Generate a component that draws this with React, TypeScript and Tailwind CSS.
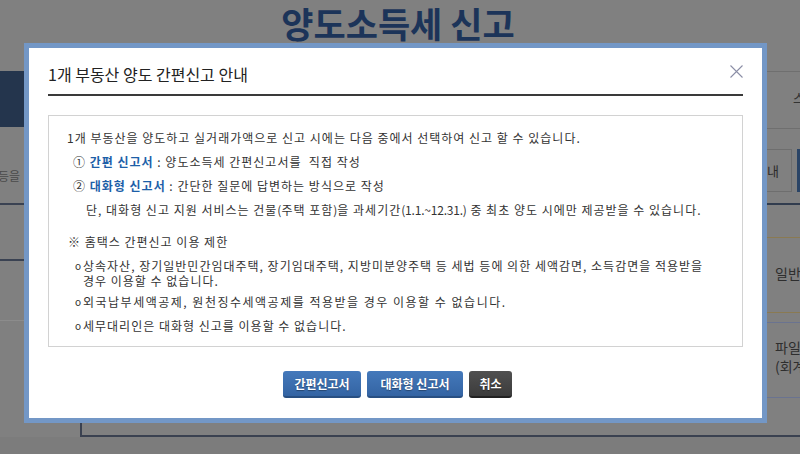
import React from "react";

const Blue = ({ children }: { children: React.ReactNode }) => (
  <b className="font-bold text-[#1d5fa8]">{children}</b>
);

const Mark = () => (
  <span className="w-[8px] shrink-0 text-[10px] tracking-normal">o</span>
);

function Modal() {
  return (
    <div className="absolute left-[24px] top-[43px] w-[743px] h-[380px] border-[5px] border-[#7397c6] bg-white px-[19px] flex flex-col">
      <div className="flex items-center justify-between pt-[15px] pb-[9px] border-b-2 border-[#3a3a3a]">
        <h2 className="text-[16px] leading-[22px] text-[#222] font-normal">1개 부동산 양도 간편신고 안내</h2>
        <svg width="13" height="13" viewBox="0 0 13 13" className="mb-[5px]">
          <path d="M0.5 0.5 L12.5 12.5 M12.5 0.5 L0.5 12.5" stroke="#8b8ea6" strokeWidth="1.1" fill="none" />
        </svg>
      </div>
      <div className="mt-[19px] h-[232px] border border-[#d2d2d2] pl-[18px] pt-[15px] text-[12px] leading-[14px] tracking-[1px] text-[#333] whitespace-pre">
        <p>1개 부동산을 양도하고 실거래가액으로 신고 시에는 다음 중에서 선택하여 신고 할 수 있습니다.</p>
        <p className="mt-[10px] pl-[6px]">
          ① <Blue>간편 신고서</Blue> : 양도소득세 간편신고서를  직접 작성
        </p>
        <p className="mt-[10px] pl-[6px]">
          ② <Blue>대화형 신고서</Blue> : 간단한 질문에 답변하는 방식으로 작성
        </p>
        <p className="mt-[10px] pl-[19px]">
          단, 대화형 신고 지원 서비스는 건물<span className="tracking-normal">(</span>주택 포함<span className="tracking-normal">)</span>을 과세기간<span className="tracking-[-0.2px]">(1.1.~12.31.)</span> 중 최초 양도 시에만 제공받을 수 있습니다.
        </p>
        <p className="mt-[18px] pl-[1px]">※ 홈택스 간편신고 이용 제한</p>
        <div className="mt-[9px] pl-[8px] flex leading-[15px]">
          <Mark />
          <span>
            상속자산, 장기일반민간임대주택, 장기임대주택, 지방미분양주택 등 세법 등에 의한 세액감면, 소득감면을 적용받을
            <br />
            경우 이용할 수 없습니다.
          </span>
        </div>
        <div className="mt-[7px] pl-[8px] flex">
          <Mark />
          <span className="tracking-[1.5px]">외국납부세액공제, 원천징수세액공제를 적용받을 경우 이용할 수 없습니다.</span>
        </div>
        <div className="mt-[10px] pl-[8px] flex">
          <Mark />
          <span>세무대리인은 대화형 신고를 이용할 수 없습니다.</span>
        </div>
      </div>
      <div className="mt-[24px] flex justify-center gap-[6px] pl-[4px]">
        <button className="w-[78px] h-[27px] rounded-[3px] bg-gradient-to-b from-[#4479bb] to-[#3464a3] border-b-2 border-[#284f82] text-white text-[12px] font-bold leading-[25px] [text-shadow:0_1px_1px_rgba(0,0,0,0.35)]">
          간편신고서
        </button>
        <button className="w-[96px] h-[27px] rounded-[3px] bg-gradient-to-b from-[#4479bb] to-[#3464a3] border-b-2 border-[#284f82] text-white text-[12px] font-bold leading-[25px] [text-shadow:0_1px_1px_rgba(0,0,0,0.35)]">
          대화형 신고서
        </button>
        <button className="w-[43px] h-[27px] rounded-[3px] bg-gradient-to-b from-[#505050] to-[#3c3c3c] border-b-2 border-[#222] text-white text-[12px] font-bold leading-[25px] [text-shadow:0_1px_1px_rgba(0,0,0,0.4)]">
          취소
        </button>
      </div>
    </div>
  );
}

export default function App() {
  return (
    <div className="w-[800px] h-[454px] relative overflow-hidden bg-[#808080] flex flex-col font-['Noto_Sans_CJK_KR','Noto_Sans',sans-serif]">
      <header className="h-[71px] flex justify-center shrink-0">
        <h1 className="text-[35px] font-bold leading-[46px] text-[#1c3459] pr-[4px]">양도소득세 신고</h1>
      </header>
      <div className="flex h-[366px] shrink-0">
        <aside className="w-[80px] flex flex-col">
          <div className="h-[56px] bg-[#24354d]" />
          <div className="h-[76px] flex justify-end w-[20px] overflow-hidden whitespace-nowrap pt-[41px] text-[12px] leading-[16px] text-[#4a4a4a]">
            신고 등을
          </div>
          <div className="h-[56px] border-t-2 border-[#3a4252]" />
          <div className="h-[61px] border-t-2 border-[#3a4252]" />
          <div className="flex-1 border-t border-[#8c8c8c]" />
        </aside>
        <main className="flex-1 flex flex-col">
          <div className="mt-auto h-[14px] border-l-2 border-b-2 border-[#3a4150]" />
        </main>
        <aside className="w-[33px] flex flex-col whitespace-nowrap border-b-2 border-[#3a4150]">
          <div className="h-[58px] border-t border-b border-[#6f6f6f] pl-[26px] pt-[18px] text-[13px] leading-[16px] text-[#333]">
            스
          </div>
          <div className="flex gap-[5px] pt-[20px]">
            <div className="w-[25px] h-[43px] shrink-0 border border-l-0 border-[#6e6e6e] flex items-center text-[13px] text-[#2a2a2a]">
              <span className="-ml-[12px]">안내</span>
            </div>
            <div className="w-[40px] h-[43px] shrink-0 bg-[#2a4466]" />
          </div>
          <div className="mt-[11px] h-[2px] bg-[#313c4e]" />
          <div className="mt-[32px] h-px bg-[#8a7a52]" />
          <div className="h-[74px] pl-[8px] pt-[26px] text-[14px] leading-[18px] text-[#2e2e2e]">일반신고</div>
          <div className="h-px bg-[#8a7a52]" />
          <div className="mt-[9px] h-px bg-[#6a7390]" />
          <div className="h-[74px] pl-[8px] pt-[15px] text-[14px] leading-[19px] text-[#2e2e2e]">
            파일변환
            <br />
            (회계프로그램)
          </div>
          <div className="h-px bg-[#6a7390]" />
        </aside>
      </div>
      <div className="flex-1 bg-[#7c7c7c]" />
      <Modal />
    </div>
  );
}
